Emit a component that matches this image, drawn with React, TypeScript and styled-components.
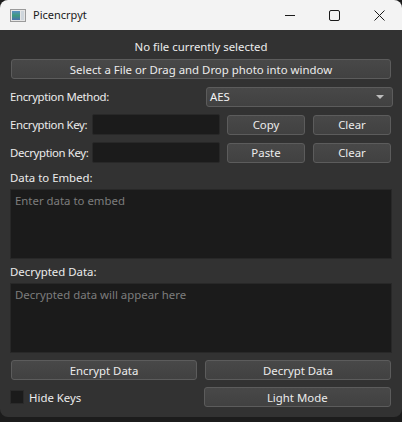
import React from "react";
import styled, { createGlobalStyle } from "styled-components";

const GlobalStyle = createGlobalStyle`
  html, body {
    margin: 0;
    padding: 0;
    background: #1c1c1c;
  }
  body {
    font-family: "Noto Sans", "Liberation Sans", sans-serif;
    font-size: 11.4px;
  }
`;

const Window = styled.div`
  width: 402px;
  height: 417px;
  border-radius: 8px;
  overflow: hidden;
  background: #323232;
  display: flex;
  flex-direction: column;
`;

const TitleBar = styled.div`
  height: 30px;
  flex: none;
  background: #f3f3f3;
  display: flex;
  align-items: center;
  color: #1a1a1a;
  font-size: 11px;
`;

const AppIcon = styled.svg`
  margin-left: 10px;
  margin-right: 7px;
`;

const Title = styled.span`
  flex: 1;
  padding-bottom: 1px;
`;

const CaptionButton = styled.div`
  width: 45px;
  height: 30px;
  display: flex;
  align-items: center;
  justify-content: center;
`;

const Body = styled.div`
  flex: 1;
  display: flex;
  flex-direction: column;
  padding: 8px 10px 0 10px;
`;

const Status = styled.div`
  color: #ececec;
  text-align: center;
  height: 17px;
  line-height: 17px;
  margin-bottom: 4px;
`;

const Button = styled.button`
  box-sizing: border-box;
  height: 20px;
  flex: 1;
  border: 1px solid #5c5c5c;
  border-radius: 3px;
  background: linear-gradient(#484848, #414141);
  color: #ececec;
  font-family: inherit;
  font-size: inherit;
  padding: 0;
  line-height: 17px;
`;

const WideButton = styled(Button)`
  margin: 0 1px;
  flex: none;
  width: 380px;
`;

const Row = styled.div<{ $top?: number }>`
  display: flex;
  align-items: center;
  margin-top: ${(p) => p.$top ?? 0}px;
  height: 21px;
`;

const Label = styled.span<{ $width?: number }>`
  color: #ececec;
  width: ${(p) => (p.$width ? `${p.$width}px` : "auto")};
  flex: none;
  white-space: nowrap;
  letter-spacing: -0.35px;
`;

const Combo = styled.div`
  box-sizing: border-box;
  margin-left: auto;
  margin-right: -1px;
  width: 187px;
  height: 20px;
  border: 1px solid #5c5c5c;
  border-radius: 3px;
  background: linear-gradient(#484848, #414141);
  color: #f4f4f4;
  display: flex;
  align-items: center;
  padding: 0 8px 0 3px;
  justify-content: space-between;
`;

const Arrow = styled.span`
  width: 0;
  height: 0;
  border-left: 4px solid transparent;
  border-right: 4px solid transparent;
  border-top: 4px solid #bdbdbd;
`;

const KeyInput = styled.div`
  box-sizing: border-box;
  width: 128px;
  height: 21px;
  background: #1b1b1b;
  border: 1px solid #282828;
  border-radius: 2px;
  margin-right: 7px;
`;

const ButtonPair = styled.div`
  display: flex;
  gap: 8px;
  width: 164px;
`;

const SectionLabel = styled.div<{ $top: number }>`
  color: #ececec;
  margin-top: ${(p) => p.$top}px;
  height: 15px;
  line-height: 15px;
`;

const TextArea = styled.div`
  box-sizing: border-box;
  margin-top: 4px;
  height: 70px;
  width: 382px;
  background: #1b1b1b;
  border: 1px solid #282828;
  color: #7d7d7d;
  padding: 3px 4px;
  line-height: 16px;
`;

const ActionRow = styled.div<{ $top: number }>`
  display: flex;
  align-items: center;
  gap: 8px;
  margin-top: ${(p) => p.$top}px;
  padding: 0 1px;
`;

const CheckWrap = styled.label`
  flex: 1;
  display: flex;
  align-items: center;
  color: #ececec;
  gap: 5px;
  margin-left: -1px;
`;

const CheckBox = styled.span`
  box-sizing: border-box;
  width: 14px;
  height: 14px;
  background: #1b1b1b;
  border: 1px solid #2a2a2a;
`;

const App = () => {
  return (
    <>
      <GlobalStyle />
      <Window>
        <TitleBar>
          <AppIcon width="16" height="13" viewBox="0 0 16 13">
            <defs>
              <linearGradient id="pic" x1="0" y1="0" x2="0" y2="1">
                <stop offset="0" stopColor="#5a8fc4" />
                <stop offset="0.5" stopColor="#3f9a7f" />
                <stop offset="1" stopColor="#4a6fb0" />
              </linearGradient>
            </defs>
            <rect x="0.5" y="0.5" width="15" height="12" fill="#e6e6e6" stroke="#9a9a9a" />
            <rect x="2" y="2" width="8" height="9" fill="url(#pic)" />
            <rect x="11" y="2" width="3" height="9" fill="#cfd6dc" />
          </AppIcon>
          <Title>Picencrpyt</Title>
          <CaptionButton>
            <svg width="10" height="10" viewBox="0 0 10 10">
              <path d="M0 5.5H10" stroke="#1a1a1a" strokeWidth="1" />
            </svg>
          </CaptionButton>
          <CaptionButton>
            <svg width="11" height="11" viewBox="0 0 11 11">
              <rect x="0.5" y="0.5" width="10" height="10" rx="1.5" fill="none" stroke="#1a1a1a" />
            </svg>
          </CaptionButton>
          <CaptionButton>
            <svg width="11" height="11" viewBox="0 0 11 11">
              <path d="M0.5 0.5L10.5 10.5M10.5 0.5L0.5 10.5" stroke="#1a1a1a" strokeWidth="1" />
            </svg>
          </CaptionButton>
        </TitleBar>
        <Body>
          <Status>No file currently selected</Status>
          <WideButton>Select a File or Drag and Drop photo into window</WideButton>
          <Row $top={7}>
            <Label>Encryption Method:</Label>
            <Combo>
              <span>AES</span>
              <Arrow />
            </Combo>
          </Row>
          <Row $top={7}>
            <Label $width={82}>Encryption Key:</Label>
            <KeyInput />
            <ButtonPair>
              <Button>Copy</Button>
              <Button>Clear</Button>
            </ButtonPair>
          </Row>
          <Row $top={7}>
            <Label $width={82}>Decryption Key:</Label>
            <KeyInput />
            <ButtonPair>
              <Button>Paste</Button>
              <Button>Clear</Button>
            </ButtonPair>
          </Row>
          <SectionLabel $top={7}>Data to Embed:</SectionLabel>
          <TextArea>Enter data to embed</TextArea>
          <SectionLabel $top={5}>Decrypted Data:</SectionLabel>
          <TextArea>Decrypted data will appear here</TextArea>
          <ActionRow $top={7}>
            <Button>Encrypt Data</Button>
            <Button>Decrypt Data</Button>
          </ActionRow>
          <ActionRow $top={7}>
            <CheckWrap>
              <CheckBox />
              Hide Keys
            </CheckWrap>
            <Button>Light Mode</Button>
          </ActionRow>
        </Body>
      </Window>
    </>
  );
};

export default App;
